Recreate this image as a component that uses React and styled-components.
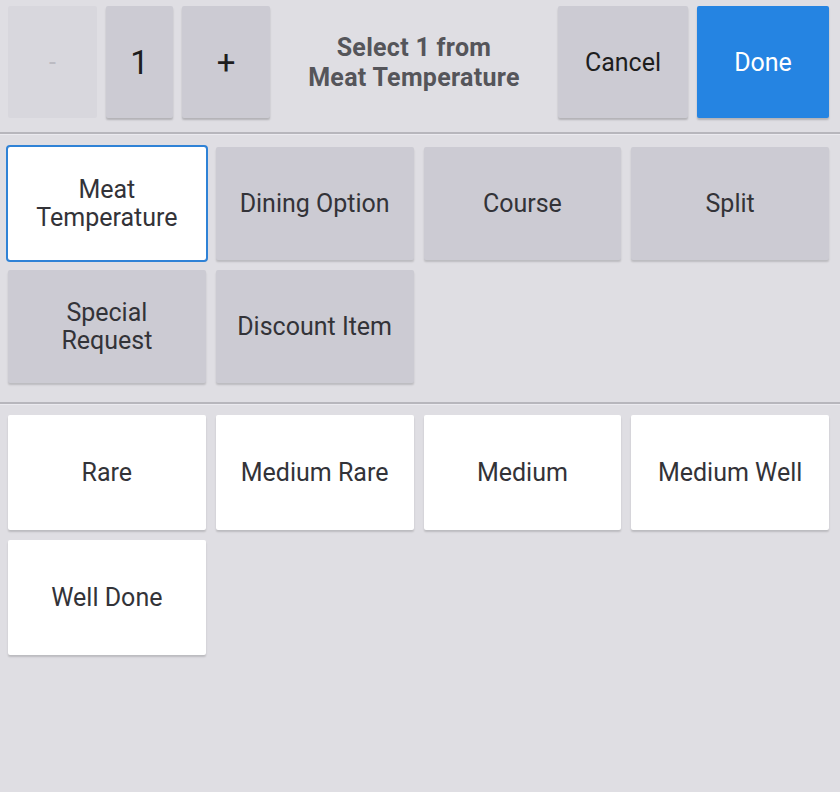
import React from "react";
import styled, { createGlobalStyle, css } from "styled-components";

const Global = createGlobalStyle`
  html, body { margin: 0; padding: 0; background: #dfdee3; }
  body { font-family: Roboto, "Noto Sans", "Liberation Sans", sans-serif; }
  * { box-sizing: border-box; }
`;

const Page = styled.div`
  width: 840px;
  height: 792px;
  background: #dfdee3;
  display: flex;
  flex-direction: column;
`;

const Header = styled.div`
  display: flex;
  align-items: stretch;
  gap: 9px;
  padding: 6px 11px 14px 8px;
  height: 132px;
`;

const HeaderButton = styled.button`
  border: none;
  border-radius: 2px;
  font-family: inherit;
  width: ${(p) => p.$w}px;
  display: flex;
  align-items: center;
  justify-content: center;
  background: #cccbd3;
  color: #1e1e1e;
  font-size: 25px;
  padding: 0;
  box-shadow: 0 2px 2px rgba(0, 0, 0, 0.2);
  ${(p) =>
    p.$variant === "disabled" &&
    css`
      background: #d8d7dd;
      color: #bcbbc2;
      box-shadow: none;
    `}
  ${(p) =>
    p.$variant === "primary" &&
    css`
      background: #2584e2;
      color: #ffffff;
    `}
  ${(p) => p.$big && css`font-size: 33px;`}
`;

const Title = styled.div`
  flex: 1;
  display: flex;
  align-items: center;
  justify-content: center;
  text-align: center;
  font-weight: 700;
  font-size: 25px;
  letter-spacing: 0.3px;
  line-height: 30px;
  color: #55555a;
  padding-top: 2px;
`;

const Divider = styled.div`
  height: 3px;
  border-top: 2px solid #b7b6bc;
  border-bottom: 1px solid #ebeaef;
`;

const Section = styled.div`
  display: grid;
  grid-template-columns: repeat(4, 1fr);
  grid-auto-rows: ${(p) => p.$row}px;
  gap: 10px 10px;
  padding: ${(p) => p.$pad};
`;

const Tile = styled.button`
  border: none;
  border-radius: 2px;
  font-family: inherit;
  font-size: 25px;
  line-height: 28px;
  color: #333338;
  padding: 0 6px;
  display: flex;
  align-items: center;
  justify-content: center;
  text-align: center;
  background: ${(p) => (p.$white ? "#ffffff" : "#cccbd3")};
  box-shadow: 0 2px 2px rgba(0, 0, 0, 0.16);
  ${(p) =>
    p.$selected &&
    css`
      background: #ffffff;
      outline: 2.5px solid #2f82d6;
      outline-offset: 0.5px;
      box-shadow: none;
    `}
`;

const groups = [
  { label: "Meat\nTemperature", selected: true },
  { label: "Dining Option" },
  { label: "Course" },
  { label: "Split" },
  { label: "Special\nRequest" },
  { label: "Discount Item" },
];

const options = ["Rare", "Medium Rare", "Medium", "Medium Well", "Well Done"];

const Label = ({ text }) =>
  text.split("\n").map((t, i, a) => (
    <React.Fragment key={i}>
      {t}
      {i < a.length - 1 && <br />}
    </React.Fragment>
  ));

export default function App() {
  return (
    <Page>
      <Global />
      <Header>
        <HeaderButton $w={89} $variant="disabled">-</HeaderButton>
        <HeaderButton $w={67} $big>1</HeaderButton>
        <HeaderButton $w={88} $big>+</HeaderButton>
        <Title>
          Select 1 from
          <br />
          Meat Temperature
        </Title>
        <HeaderButton $w={130}>Cancel</HeaderButton>
        <HeaderButton $w={132} $variant="primary">Done</HeaderButton>
      </Header>
      <Divider />
      <Section $row={113} $pad="12px 11px 19px 8px">
        {groups.map((g) => (
          <Tile key={g.label} $selected={g.selected}>
            <span>
              <Label text={g.label} />
            </span>
          </Tile>
        ))}
      </Section>
      <Divider />
      <Section $row={115} $pad="10px 11px 0 8px">
        {options.map((o) => (
          <Tile key={o} $white>
            {o}
          </Tile>
        ))}
      </Section>
    </Page>
  );
}
